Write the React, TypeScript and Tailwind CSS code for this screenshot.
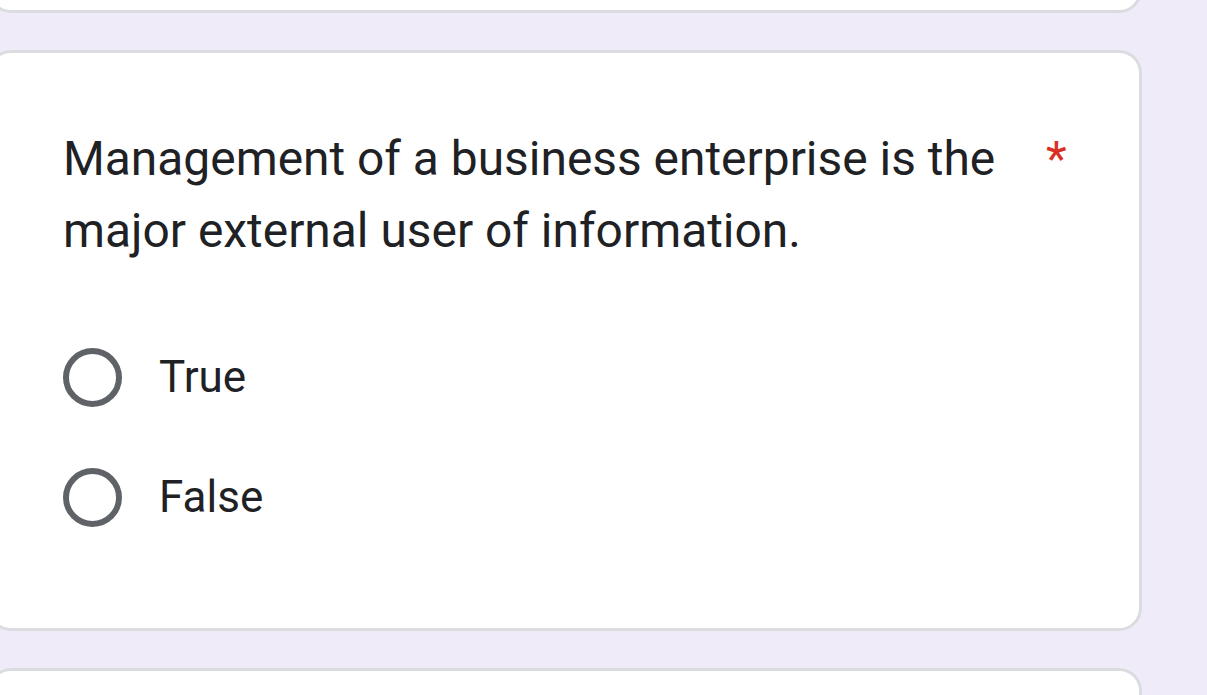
export default function App() {
  const font = { fontFamily: 'Roboto, "Noto Sans", Arial, sans-serif' };
  const options = ["True", "False"];
  return (
    <div className="h-[695px] w-[1207px] overflow-hidden bg-[#efebf8]" style={font}>
      <div className="ml-[-12px] mt-[-100px] flex w-[1154px] flex-col gap-[37px]">
        <div className="h-[113px] rounded-[23px] border-[3px] border-[#dadce0] bg-white" />
        <div className="rounded-[23px] border-[3px] border-[#dadce0] bg-white pl-[72px] pt-[70px] pb-[102px]">
          <div className="flex items-start">
            <div className="w-[975px] text-[47.9px] leading-[72px] text-[#202124]">
              Management of a business enterprise is the major external user of information.
            </div>
            <span className="pl-[8px] text-[48px] leading-[72px] text-[#d93025]">*</span>
          </div>
          <div className="mt-[81px] flex flex-col gap-[62px]">
            {options.map((o) => (
              <div key={o} className="flex h-[58px] items-center">
                <div className="h-[59px] w-[59px] rounded-full border-[6px] border-[#5f6368]" />
                <span className="ml-[37px] text-[44px] leading-[58px] text-[#202124]">{o}</span>
              </div>
            ))}
          </div>
        </div>
        <div className="h-[200px] rounded-[23px] border-[3px] border-[#dadce0] bg-white" />
      </div>
    </div>
  );
}
